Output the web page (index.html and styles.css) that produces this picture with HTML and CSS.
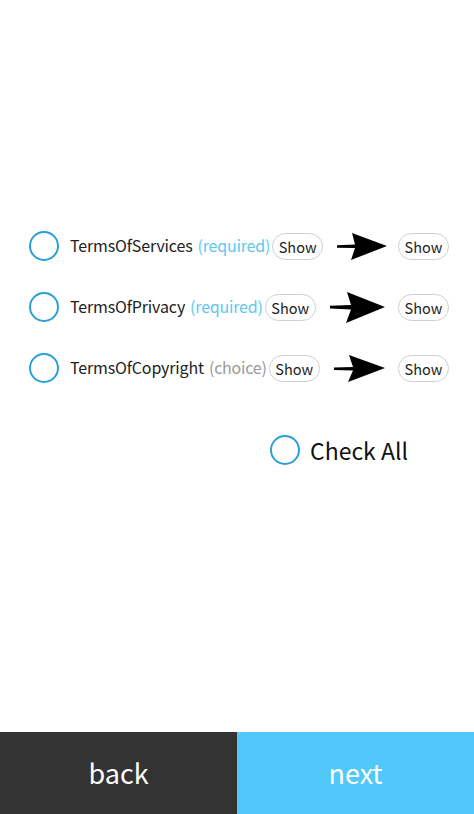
FILE: index.html
```html
<!DOCTYPE html>
<html>
<head>
    <title>Terms</title>
    <link rel="stylesheet" href="styles.css">
</head>
<body>
    <div class="page">
        <div class="terms">
            <!-- Terms list -->
            <div class="term-row">
                <span class="check"></span>
                <span class="term-name">TermsOfServices</span>
                <span class="tag required">(required)</span>
                <button class="show-btn">Show</button>
                <span class="arrow-slot">
                    <svg class="arrow" width="50" height="27" viewBox="0 0 50 27"><path d="M0 12.2 L18 11.6 L15 0 L50 13 L14 27 L18 15 L0 14.8 Z" fill="#000"/></svg>
                </span>
                <button class="show-btn">Show</button>
            </div>
            <div class="term-row">
                <span class="check"></span>
                <span class="term-name">TermsOfPrivacy</span>
                <span class="tag required">(required)</span>
                <button class="show-btn">Show</button>
                <span class="arrow-slot">
                    <svg class="arrow" width="55" height="31" viewBox="0 0 55 31"><path d="M0 13.8 L21 13 L17 0 L55 15 L16 31 L21 17.5 L0 16.6 Z" fill="#000"/></svg>
                </span>
                <button class="show-btn">Show</button>
            </div>
            <div class="term-row">
                <span class="check"></span>
                <span class="term-name">TermsOfCopyright</span>
                <span class="tag choice">(choice)</span>
                <button class="show-btn">Show</button>
                <span class="arrow-slot">
                    <svg class="arrow" width="51" height="27" viewBox="0 0 51 27"><path d="M0 12.6 L19 12 L15 0 L51 13 L14 27 L19 15.5 L0 15 Z" fill="#000"/></svg>
                </span>
                <button class="show-btn">Show</button>
            </div>

            <!-- Check all -->
            <div class="check-all">
                <span class="check"></span>
                <span class="check-all-text">Check All</span>
            </div>
        </div>

        <!-- Bottom buttons -->
        <div class="footer">
            <button class="back-btn">back</button>
            <button class="next-btn">next</button>
        </div>
    </div>
</body>
</html>
```
FILE: styles.css
```css
body {
    margin: 0;
    background: #fff;
    font-family: "Noto Sans CJK KR", "Noto Sans", sans-serif;
    color: #222;
}
.page {
    height: 814px;
    display: flex;
    flex-direction: column;
}
.terms {
    flex: 1;
    padding: 226px 25px 0 29px;
}
.term-row {
    display: flex;
    align-items: center;
    height: 40px;
    margin-bottom: 21px;
}
.check {
    width: 26px;
    height: 26px;
    border: 2px solid #2a9fd8;
    border-radius: 50%;
    flex-shrink: 0;
}
.term-name {
    font-size: 16px;
    margin-left: 11px;
    letter-spacing: -0.15px;
    margin-top: -3px;
}
.tag {
    font-size: 16px;
    margin-left: 5px;
    letter-spacing: -0.2px;
    margin-top: -3px;
}
.required {
    color: #5cc8f2;
}
.choice {
    color: #9a9a9a;
}
.show-btn {
    font-family: inherit;
    font-size: 14.5px;
    color: #222;
    background: #fff;
    border: 1.5px solid #cfcfcf;
    border-radius: 14px;
    width: 51px;
    height: 27px;
    padding: 0;
    margin-left: 2px;
    flex-shrink: 0;
}
.arrow-slot {
    flex: 1;
    display: flex;
    justify-content: center;
    padding-left: 4px;
}
.check-all {
    display: flex;
    align-items: center;
    margin-top: 45px;
    padding-left: 241px;
}
.check-all-text {
    font-size: 23px;
    margin-left: 10px;
    color: #111;
}
.footer {
    display: flex;
    height: 82px;
}
.footer button {
    flex: 1;
    border: none;
    color: #fff;
    font-family: inherit;
    font-size: 27px;
    padding: 0 0 2px;
}
.back-btn {
    background-color: #333333;
}
.next-btn {
    background-color: #52c8fa;
}
```
